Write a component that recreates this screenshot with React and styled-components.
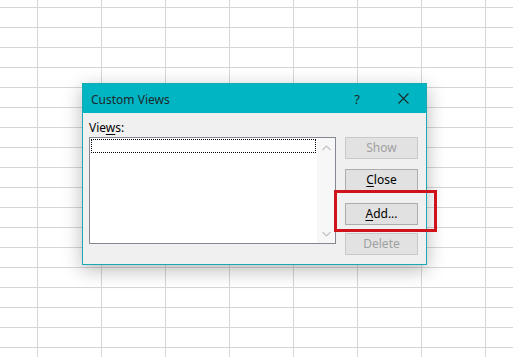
import styled, { createGlobalStyle } from "styled-components";

const GlobalStyle = createGlobalStyle`
  html, body {
    margin: 0;
    padding: 0;
  }
  body {
    font-family: "Noto Sans", "Open Sans", sans-serif;
  }
`;

function App() {
  return (
    <Sheet>
      <GlobalStyle />
      <Dialog>
        <TitleBar>
          <Title>Custom Views</Title>
          <TitleButton>?</TitleButton>
          <TitleButton>
            <svg width="11" height="11" viewBox="0 0 11 11">
              <path d="M0.5 0.5 L10.5 10.5 M10.5 0.5 L0.5 10.5" stroke="#1b2a2e" strokeWidth="1.1" fill="none" />
            </svg>
          </TitleButton>
        </TitleBar>
        <Body>
          <Label>
            Vie<u>w</u>s:
          </Label>
          <span />
          <ListBox>
            <ListArea>
              <FocusRow />
            </ListArea>
            <ScrollBar>
              <svg width="9" height="6" viewBox="0 0 9 6">
                <path d="M0.5 5 L4.5 1 L8.5 5" stroke="#c4c4c4" strokeWidth="1.2" fill="none" />
              </svg>
              <svg width="9" height="6" viewBox="0 0 9 6">
                <path d="M0.5 1 L4.5 5 L8.5 1" stroke="#c4c4c4" strokeWidth="1.2" fill="none" />
              </svg>
            </ScrollBar>
          </ListBox>
          <Buttons>
            <Button disabled>Show</Button>
            <Button>
              <u>C</u>lose
            </Button>
            <Highlighted>
              <Button>
                <u>A</u>dd...
              </Button>
              <Callout />
            </Highlighted>
            <Button disabled>Delete</Button>
          </Buttons>
        </Body>
      </Dialog>
    </Sheet>
  );
}

export default App;

const Sheet = styled.div`
  width: 513px;
  height: 357px;
  box-sizing: border-box;
  padding: 83px 0 0 82px;
  overflow: hidden;
  background-color: #ffffff;
  background-image: linear-gradient(to right, #d6d6d6 1px, transparent 1px),
    linear-gradient(to bottom, #d6d6d6 1px, transparent 1px);
  background-size: 64px 20px;
  background-position: 37px 7px;
`;

const Dialog = styled.div`
  width: 345px;
  box-sizing: border-box;
  border: 1px solid #17a9b4;
  background: #f0f0f0;
  box-shadow: 0 5px 18px rgba(0, 0, 0, 0.28);
`;

const TitleBar = styled.div`
  height: 29px;
  background: #01b5c2;
  display: flex;
  align-items: center;
  padding: 0 0 0 8px;
`;

const Title = styled.div`
  flex: 1;
  font-size: 12px;
  color: #1b2a2e;
  padding-top: 1px;
`;

const TitleButton = styled.div`
  width: 46px;
  height: 29px;
  display: flex;
  align-items: center;
  justify-content: center;
  font-size: 13px;
  color: #1b2a2e;
`;

const Body = styled.div`
  display: grid;
  grid-template-columns: 247px 73px;
  column-gap: 9px;
  align-items: start;
  padding: 0 9px 9px 6px;
`;

const Label = styled.div`
  height: 24px;
  box-sizing: border-box;
  padding-top: 7px;
  font-size: 12px;
  line-height: 16px;
  color: #000;

  u {
    text-underline-offset: 2px;
  }
`;

const ListBox = styled.div`
  height: 107px;
  box-sizing: border-box;
  border: 1px solid #828790;
  background: #fff;
  display: flex;
`;

const ListArea = styled.div`
  flex: 1;
  padding: 1px 1px 0 1px;
`;

const FocusRow = styled.div`
  height: 12px;
  border: 1px dotted #000;
`;

const ScrollBar = styled.div`
  width: 18px;
  background: #f7f7f7;
  display: flex;
  flex-direction: column;
  justify-content: space-between;
  align-items: center;
  padding: 7px 0 6px;
  box-sizing: border-box;
`;

const Buttons = styled.div`
  display: flex;
  flex-direction: column;
  gap: 10px;
`;

const Button = styled.button`
  width: 73px;
  height: 22px;
  box-sizing: border-box;
  border: 1px solid #adadad;
  background: #e1e1e1;
  font-family: "Noto Sans", "Open Sans", sans-serif;
  font-size: 12px;
  line-height: 1;
  color: #000;
  padding: 0;

  &:disabled {
    color: #a0a0a0;
    border-color: #c8c8c8;
    background: #e2e2e2;
  }

  u {
    text-underline-offset: 2px;
  }
`;

const Highlighted = styled.div`
  position: relative;
  height: 22px;
`;

const Callout = styled.div`
  position: absolute;
  left: -11px;
  top: -11px;
  width: 103px;
  height: 42px;
  box-sizing: border-box;
  border: 3px solid #d0121b;
  pointer-events: none;
`;
